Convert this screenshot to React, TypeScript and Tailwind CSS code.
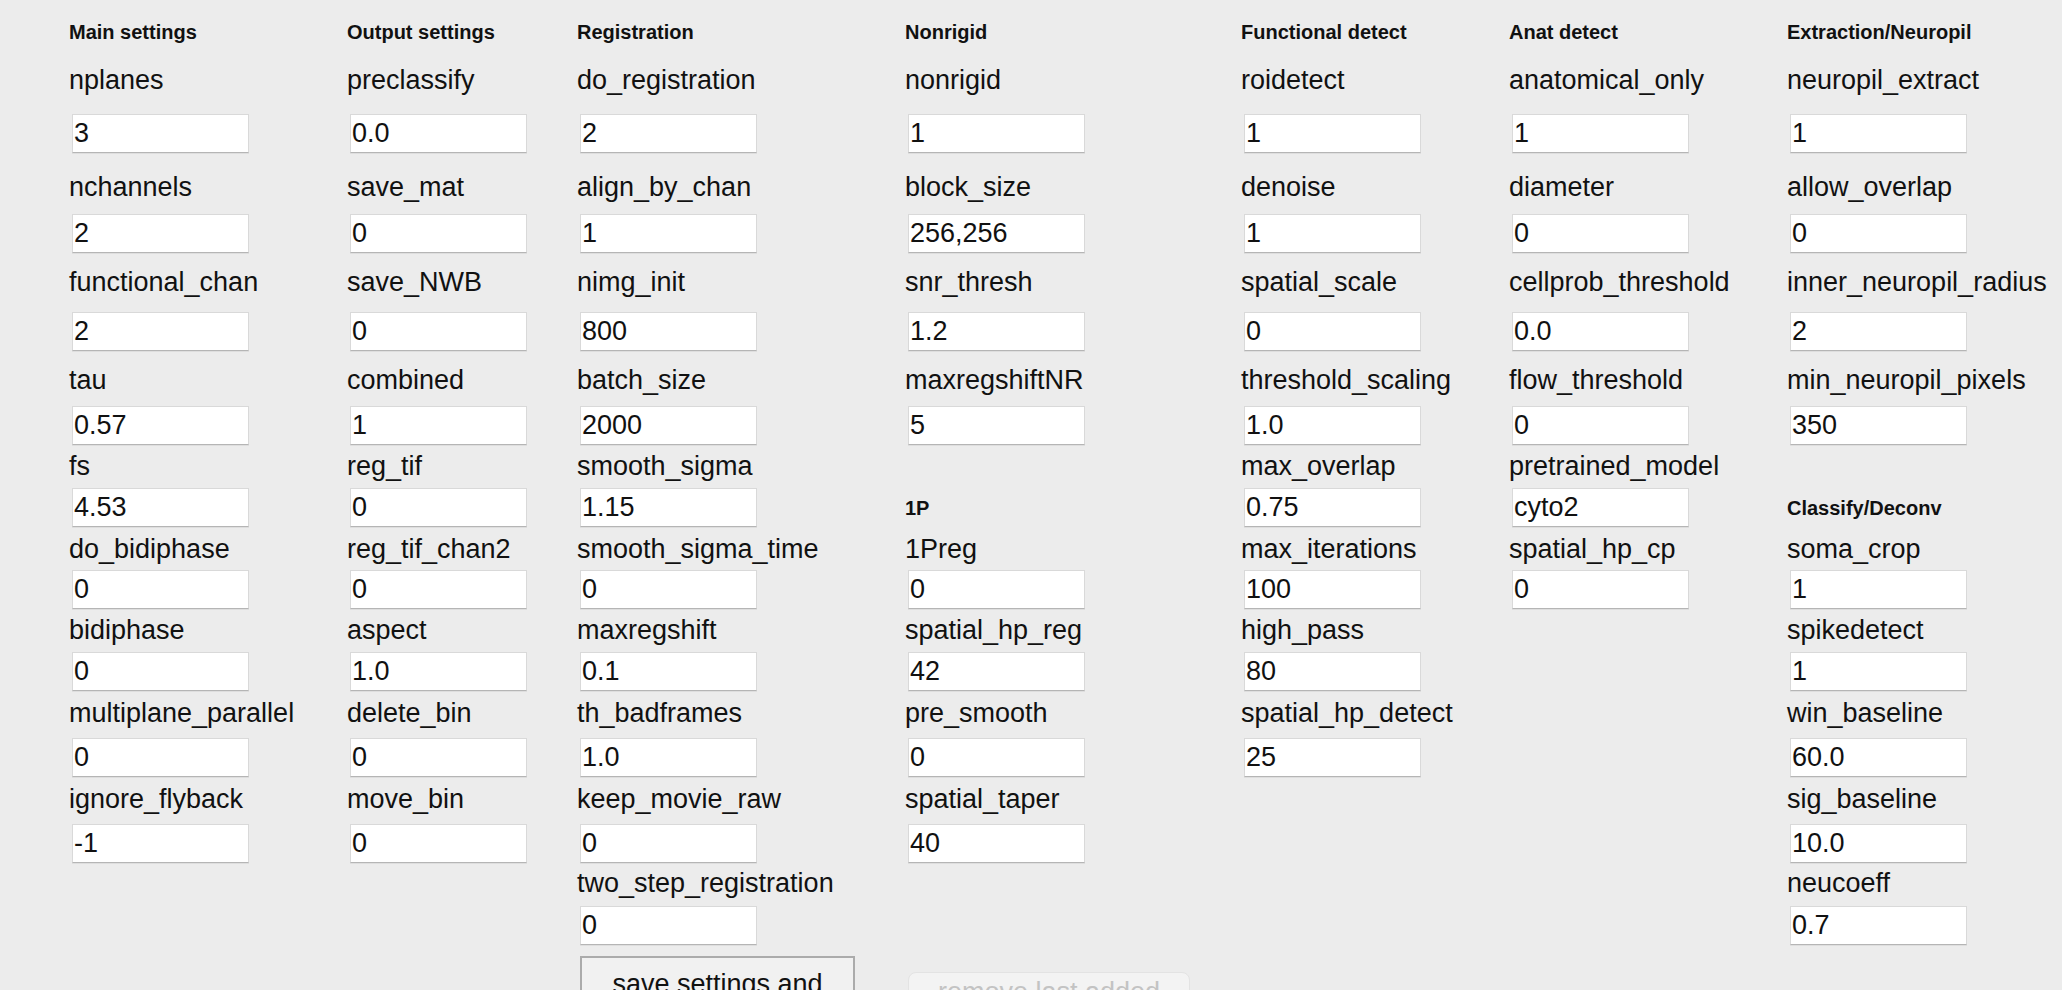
type Item =
    | { kind: "field"; label: string; value: string }
    | { kind: "sub"; text: string };

// spacing of each label/input pair, shared by every column (Qt grid rows)
const rows = [
    { lt: "mt-[21px]", it: "mt-[18px]" },
    { lt: "mt-[19px]", it: "mt-[11px]" },
    { lt: "mt-[14px]", it: "mt-[14px]" },
    { lt: "mt-[14px]", it: "mt-[10px]" },
    { lt: "mt-[6px]", it: "mt-[6px]" },
    { lt: "mt-[7px]", it: "mt-[5px]" },
    { lt: "mt-[6px]", it: "mt-[6px]" },
    { lt: "mt-[7px]", it: "mt-[9px]" },
    { lt: "mt-[7px]", it: "mt-[9px]" },
    { lt: "mt-[5px]", it: "mt-[7px]" },
];

const f = (label: string, value: string): Item => ({ kind: "field", label, value });
const sub = (text: string): Item => ({ kind: "sub", text });

const columns: { title: string; width: string; items: Item[] }[] = [
    {
        title: "Main settings",
        width: "w-[278px]",
        items: [
            f("nplanes", "3"),
            f("nchannels", "2"),
            f("functional_chan", "2"),
            f("tau", "0.57"),
            f("fs", "4.53"),
            f("do_bidiphase", "0"),
            f("bidiphase", "0"),
            f("multiplane_parallel", "0"),
            f("ignore_flyback", "-1"),
        ],
    },
    {
        title: "Output settings",
        width: "w-[230px]",
        items: [
            f("preclassify", "0.0"),
            f("save_mat", "0"),
            f("save_NWB", "0"),
            f("combined", "1"),
            f("reg_tif", "0"),
            f("reg_tif_chan2", "0"),
            f("aspect", "1.0"),
            f("delete_bin", "0"),
            f("move_bin", "0"),
        ],
    },
    {
        title: "Registration",
        width: "w-[328px]",
        items: [
            f("do_registration", "2"),
            f("align_by_chan", "1"),
            f("nimg_init", "800"),
            f("batch_size", "2000"),
            f("smooth_sigma", "1.15"),
            f("smooth_sigma_time", "0"),
            f("maxregshift", "0.1"),
            f("th_badframes", "1.0"),
            f("keep_movie_raw", "0"),
            f("two_step_registration", "0"),
        ],
    },
    {
        title: "Nonrigid",
        width: "w-[336px]",
        items: [
            f("nonrigid", "1"),
            f("block_size", "256,256"),
            f("snr_thresh", "1.2"),
            f("maxregshiftNR", "5"),
            sub("1P"),
            f("1Preg", "0"),
            f("spatial_hp_reg", "42"),
            f("pre_smooth", "0"),
            f("spatial_taper", "40"),
        ],
    },
    {
        title: "Functional detect",
        width: "w-[268px]",
        items: [
            f("roidetect", "1"),
            f("denoise", "1"),
            f("spatial_scale", "0"),
            f("threshold_scaling", "1.0"),
            f("max_overlap", "0.75"),
            f("max_iterations", "100"),
            f("high_pass", "80"),
            f("spatial_hp_detect", "25"),
        ],
    },
    {
        title: "Anat detect",
        width: "w-[278px]",
        items: [
            f("anatomical_only", "1"),
            f("diameter", "0"),
            f("cellprob_threshold", "0.0"),
            f("flow_threshold", "0"),
            f("pretrained_model", "cyto2"),
            f("spatial_hp_cp", "0"),
        ],
    },
    {
        title: "Extraction/Neuropil",
        width: "flex-1",
        items: [
            f("neuropil_extract", "1"),
            f("allow_overlap", "0"),
            f("inner_neuropil_radius", "2"),
            f("min_neuropil_pixels", "350"),
            sub("Classify/Deconv"),
            f("soma_crop", "1"),
            f("spikedetect", "1"),
            f("win_baseline", "60.0"),
            f("sig_baseline", "10.0"),
            f("neucoeff", "0.7"),
        ],
    },
];

function Row({ item, idx }: { item: Item; idx: number }) {
    const r = rows[idx];
    if (item.kind === "sub") {
        return (
            <>
                <div className={"h-[31px] " + r.lt} />
                <div className={"h-[39px] pt-[8px] text-[20px] font-bold leading-[24px] " + r.it}>
                    {item.text}
                </div>
            </>
        );
    }
    return (
        <>
            <div className={"h-[31px] whitespace-nowrap text-[27px] leading-[31px] " + r.lt}>
                {item.label}
            </div>
            <input
                readOnly
                defaultValue={item.value}
                className={
                    "ml-[3px] box-border block h-[39px] w-[177px] border border-[#d9d9d9] border-b-[#b5b5b5] bg-white pl-[1px] text-[27px] leading-[37px] text-[#111] shadow-[0_1px_0_rgba(0,0,0,0.06)] outline-none " +
                    r.it
                }
            />
        </>
    );
}

export default function App() {
    return (
        <div className="h-[990px] overflow-hidden bg-[#ececec] font-['Liberation_Sans',Arial,sans-serif] text-[#111]">
            <div className="flex pl-[69px]">
                {columns.map((col) => (
                    <div key={col.title} className={"flex shrink-0 flex-col " + col.width}>
                        <div className="pt-[20px] text-[20px] font-bold leading-[24px] whitespace-nowrap">
                            {col.title}
                        </div>
                        {col.items.map((item, i) => (
                            <Row key={i} item={item} idx={i} />
                        ))}
                        {col.title === "Registration" && (
                            <button className="ml-[3px] mt-[11px] h-[80px] w-[275px] border-2 border-[#ababab] bg-[#f1f1f1] px-[18px] pt-[7px] text-center text-[27px] leading-[31px] text-[#111]">
                                save settings and run suite2p
                            </button>
                        )}
                        {col.title === "Nonrigid" && (
                            <button
                                disabled
                                className="ml-[3px] mt-[109px] h-[60px] w-[282px] rounded-[8px] border border-[#e3e3e3] bg-[#f3f3f3] pt-[4px] text-[27px] leading-[31px] text-[#c3c3c3] flex justify-center items-start"
                            >
                                remove last added
                            </button>
                        )}
                    </div>
                ))}
            </div>
        </div>
    );
}
